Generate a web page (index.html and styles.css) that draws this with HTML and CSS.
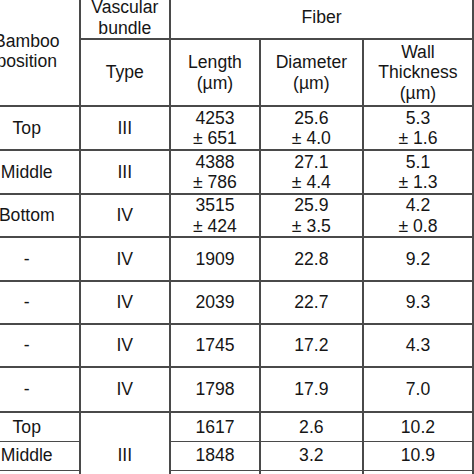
FILE: index.html
```html
<!DOCTYPE html>
<html>
<head>
<meta charset="utf-8">
<link rel="stylesheet" href="styles.css">
</head>
<body>
<table class="data">
  <colgroup>
    <col class="c1"><col class="c2"><col class="c3"><col class="c4"><col class="c5">
  </colgroup>
  <thead>
    <tr class="h1">
      <th rowspan="2">Bamboo<br>position</th>
      <th>Vascular<br>bundle</th>
      <th colspan="3">Fiber</th>
    </tr>
    <tr class="h2">
      <th>Type</th>
      <th>Length<br>(µm)</th>
      <th>Diameter<br>(µm)</th>
      <th>Wall<br>Thickness<br>(µm)</th>
    </tr>
  </thead>
  <tbody>
    <tr class="r44"><td>Top</td><td>III</td><td>4253<br>± 651</td><td>25.6<br>± 4.0</td><td>5.3<br>± 1.6</td></tr>
    <tr class="r44"><td>Middle</td><td>III</td><td>4388<br>± 786</td><td>27.1<br>± 4.4</td><td>5.1<br>± 1.3</td></tr>
    <tr class="r43"><td>Bottom</td><td>IV</td><td>3515<br>± 424</td><td>25.9<br>± 3.5</td><td>4.2<br>± 0.8</td></tr>
    <tr class="r44"><td>-</td><td>IV</td><td>1909</td><td>22.8</td><td>9.2</td></tr>
    <tr class="r43"><td>-</td><td>IV</td><td>2039</td><td>22.7</td><td>9.3</td></tr>
    <tr class="r43"><td>-</td><td>IV</td><td>1745</td><td>17.2</td><td>4.3</td></tr>
    <tr class="r45"><td>-</td><td>IV</td><td>1798</td><td>17.9</td><td>7.0</td></tr>
    <tr class="r29"><td class="thin">Top</td><td rowspan="3">III</td><td class="thin">1617</td><td class="thin">2.6</td><td class="thin">10.2</td></tr>
    <tr class="r29"><td class="thin">Middle</td><td class="thin">1848</td><td class="thin">3.2</td><td class="thin">10.9</td></tr>
    <tr class="r29"><td class="thin">Bottom</td><td class="thin">1570</td><td class="thin">2.9</td><td class="thin">10.5</td></tr>
  </tbody>
</table>
</body>
</html>
```
FILE: styles.css
```css
html, body {
  margin: 0;
  padding: 0;
  background: #ffffff;
  overflow: hidden;
}

.data {
  border-collapse: collapse;
  table-layout: fixed;
  margin: -5px 0 0 -27px;
  font-family: "Liberation Sans", Arial, sans-serif;
  font-size: 17.6px;
  line-height: 20.5px;
  color: #161616;
}

.c1 { width: 108px; }
.c2 { width: 92px; }
.c3 { width: 92px; }
.c4 { width: 105px; }
.c5 { width: 112px; }

.data th,
.data td {
  border: 2px solid #4a4a4a;
  padding: 0;
  text-align: center;
  vertical-align: middle;
  font-weight: normal;
}

.h1 { height: 40px; }
.h2 { height: 67px; }
.r43 { height: 43px; }
.r44 { height: 44px; }
.r45 { height: 45px; }
.r29 { height: 29px; }

.data td.thin {
  border-top-width: 1px;
  border-bottom-width: 1px;
}
```
